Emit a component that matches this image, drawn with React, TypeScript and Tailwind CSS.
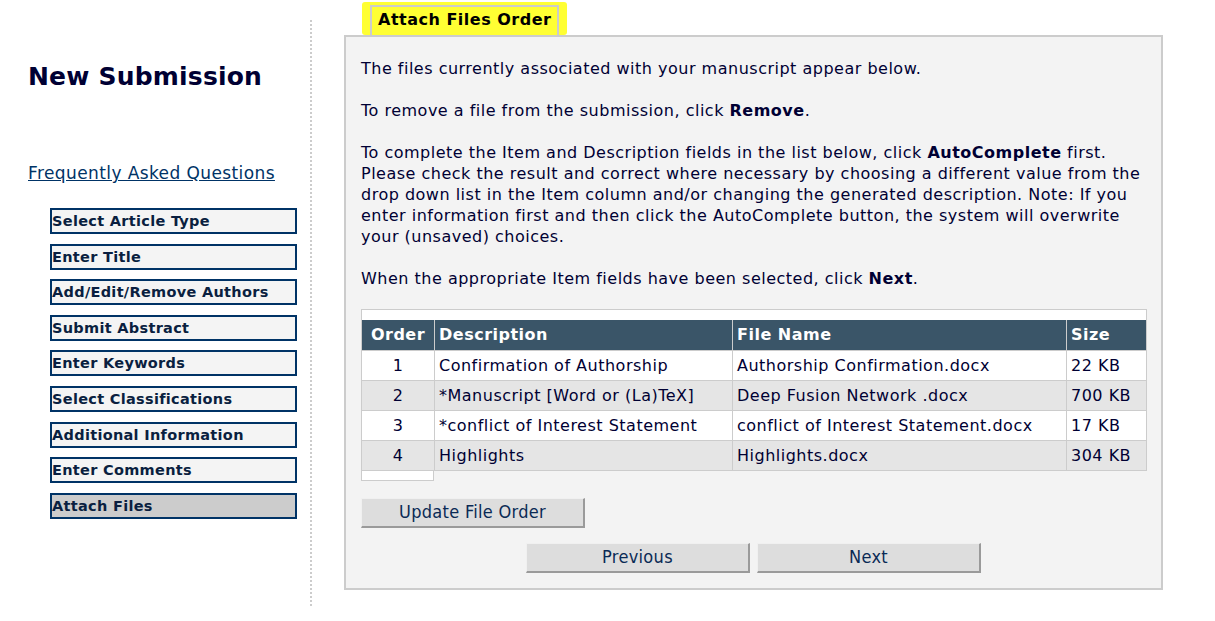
import React from "react";

const navItems = [
  "Select Article Type",
  "Enter Title",
  "Add/Edit/Remove Authors",
  "Submit Abstract",
  "Enter Keywords",
  "Select Classifications",
  "Additional Information",
  "Enter Comments",
  "Attach Files",
];

const rows = [
  ["1", "Confirmation of Authorship", "Authorship Confirmation.docx", "22 KB"],
  ["2", "*Manuscript [Word or (La)TeX]", "Deep Fusion Network .docx", "700 KB"],
  ["3", "*conflict of Interest Statement", "conflict of Interest Statement.docx", "17 KB"],
  ["4", "Highlights", "Highlights.docx", "304 KB"],
];

function Btn({ label, className }: { label: string; className: string }) {
  return (
    <button
      className={
        "h-[30px] bg-[#dddddd] border-t border-l border-t-[#f0f0f0] border-l-[#f0f0f0] border-b-2 border-r-2 border-b-[#9a9a9a] border-r-[#9a9a9a] text-[18px] tracking-[0.3px] leading-[26px] text-[#0a2a55] font-['DejaVu_Sans_Condensed','DejaVu_Sans',sans-serif] " +
        className
      }
    >
      {label}
    </button>
  );
}

export default function App() {
  return (
    <div className="w-[1215px] h-[621px] bg-white flex font-['DejaVu_Sans',sans-serif] text-[#000033] overflow-hidden">
      {/* Sidebar */}
      <div className="w-[310px] shrink-0 flex flex-col pl-[28px]">
        <h1 className="mt-[60px] text-[25px] font-bold leading-[34px] text-[#000033] tracking-[0.2px]">
          New Submission
        </h1>
        <a className="mt-[68px] text-[17px] leading-[22px] underline text-[#003366] w-fit tracking-[0.4px]">
          Frequently Asked Questions
        </a>
        <div className="mt-[24px] ml-[22px] flex flex-col gap-[9.6px]">
          {navItems.map((n, i) => (
            <div
              key={n}
              className={
                "w-[247px] h-[26px] border-2 border-[#003366] text-[14.5px] font-bold leading-[22px] tracking-[0.3px] text-[#0a1f40] " +
                (i === navItems.length - 1 ? "bg-[#cccccc]" : "bg-[#f4f4f4]")
              }
            >
              {n}
            </div>
          ))}
        </div>
      </div>
      {/* Divider */}
      <div className="w-0 mt-[20px] h-[586px] border-l-2 border-dotted border-[#cccccc]" />
      {/* Main */}
      <div className="ml-[32px] flex flex-col w-[819px]">
        <div className="ml-[18px] mt-[2px] w-fit bg-[#ffff33] px-[8px] pt-[3px] rounded-[3px]">
          <div className="border-2 border-b-0 border-[#cccccc] bg-[#ffff33] px-[6px] h-[30px] text-[16px] font-bold text-black leading-[26px] tracking-[0.5px]">
            Attach Files Order
          </div>
        </div>
        <div className="h-[555px] border-2 border-[#cccccc] bg-[#f3f3f3] px-[15px] pt-[21px] text-[16px] leading-[21px] tracking-[0.5px] text-[#000033]">
          <p>The files currently associated with your manuscript appear below.</p>
          <p className="mt-[21px]">
            To remove a file from the submission, click <b>Remove</b>.
          </p>
          <p className="mt-[21px]">
            To complete the Item and Description fields in the list below, click <b>AutoComplete</b> first.
            <br />
            Please check the result and correct where necessary by choosing a different value from the
            drop down list in the Item column and/or changing the generated description. Note: If you
            enter information first and then click the AutoComplete button, the system will overwrite
            your (unsaved) choices.
          </p>
          <p className="mt-[21px]">
            When the appropriate Item fields have been selected, click <b>Next</b>.
          </p>
          <div className="mt-[20px] w-[786px]">
            <div className="h-[11px] bg-white border border-b-0 border-[#cccccc]" />
            <table className="w-full border-collapse text-[16px]">
              <thead>
                <tr className="bg-[#3a5568] text-white h-[30px]">
                  <th className="w-[73px] text-center font-bold border-x border-[#cccccc]">Order</th>
                  <th className="w-[298px] text-left font-bold pl-[4px] border-r border-[#cccccc]">Description</th>
                  <th className="w-[334px] text-left font-bold pl-[4px] border-r border-[#cccccc]">File Name</th>
                  <th className="text-left font-bold pl-[4px] border-r border-[#cccccc]">Size</th>
                </tr>
              </thead>
              <tbody>
                {rows.map((r, i) => (
                  <tr key={r[0]} className={"h-[30px] " + (i % 2 === 1 ? "bg-[#e5e5e5]" : "bg-white")}>
                    <td className="text-center border border-[#cccccc]">{r[0]}</td>
                    <td className="pl-[4px] border border-[#cccccc]">{r[1]}</td>
                    <td className="pl-[4px] border border-[#cccccc]">{r[2]}</td>
                    <td className="pl-[4px] border border-[#cccccc]">{r[3]}</td>
                  </tr>
                ))}
              </tbody>
            </table>
            <div className="w-[73px] h-[10px] bg-white border border-t-0 border-[#cccccc]" />
          </div>
          <div className="mt-[17px]">
            <Btn label="Update File Order" className="w-[224px]" />
          </div>
          <div className="mt-[15px] flex gap-[7px] pl-[165px]">
            <Btn label="Previous" className="w-[224px]" />
            <Btn label="Next" className="w-[224px]" />
          </div>
        </div>
      </div>
    </div>
  );
}
